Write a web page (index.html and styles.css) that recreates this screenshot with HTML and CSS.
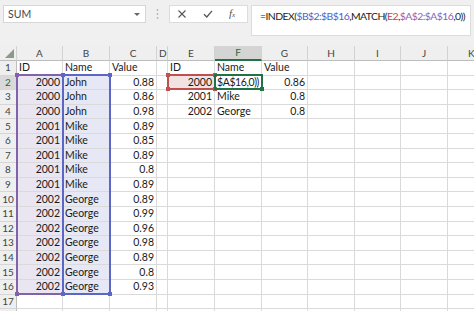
FILE: index.html
```html
<!DOCTYPE html>
<html lang="en">
<head>
  <meta charset="UTF-8">
  <title>INDEX MATCH</title>
  <link rel="stylesheet" href="styles.css">
</head>
<body>
<div class="toolbar">
  <div class="namebox"><span>SUM</span><span class="caret"></span></div>
  <div class="grip">
    <svg width="3" height="12" viewBox="0 0 3 12"><circle cx="1.5" cy="2" r="0.9" fill="#b5b5b5"/><circle cx="1.5" cy="6" r="0.9" fill="#b5b5b5"/><circle cx="1.5" cy="10" r="0.9" fill="#b5b5b5"/></svg>
  </div>
  <div class="fxbtns">
    <svg class="ico" width="10" height="10" viewBox="0 0 10 10"><path d="M1.5 1.5L8.5 8.5M8.5 1.5L1.5 8.5" stroke="#555" stroke-width="1.1" fill="none"/></svg>
    <svg class="ico" width="10" height="10" viewBox="0 0 10 10"><path d="M1 5.2L3.8 8L9 1.8" stroke="#555" stroke-width="1.3" fill="none"/></svg>
    <span class="fx">f<small>x</small></span>
  </div>
  <div class="formula">=INDEX(<span class="ref-b">$B$2:$B$16</span>,MATCH(<span class="ref-e">E2</span>,<span class="ref-a">$A$2:$A$16</span>,0))</div>
</div>

<div class="sheetwrap">
  <table class="sheet">
    <colgroup>
      <col class="c-rh"><col class="c46"><col class="c47"><col class="c47"><col class="c11"><col class="c47"><col class="c47"><col class="c46"><col class="c47"><col class="c46"><col class="c47"><col class="c47">
    </colgroup>
    <tr class="hdr">
      <td class="corner"><span class="tri"></span></td><td>A</td><td>B</td><td>C</td><td>D</td><td>E</td><td class="on">F</td><td>G</td><td>H</td><td>I</td><td>J</td><td class="k">K</td>
    </tr>
    <tr>
      <td class="rh">1</td><td>ID</td><td>Name</td><td>Value</td><td></td><td>ID</td><td>Name</td><td>Value</td><td></td><td></td><td></td><td></td>
    </tr>
    <tr>
      <td class="rh on">2</td><td class="n ra">2000</td><td class="rb">John</td><td class="n">0.88</td><td></td><td class="n re">2000</td><td class="edit">$A$16,0))</td><td class="n">0.86</td><td></td><td></td><td></td><td></td>
    </tr>
    <tr>
      <td class="rh">3</td><td class="n ra">2000</td><td class="rb">John</td><td class="n">0.86</td><td></td><td class="n">2001</td><td>Mike</td><td class="n">0.8</td><td></td><td></td><td></td><td></td>
    </tr>
    <tr>
      <td class="rh">4</td><td class="n ra">2000</td><td class="rb">John</td><td class="n">0.98</td><td></td><td class="n">2002</td><td>George</td><td class="n">0.8</td><td></td><td></td><td></td><td></td>
    </tr>
    <tr>
      <td class="rh">5</td><td class="n ra">2001</td><td class="rb">Mike</td><td class="n">0.89</td><td></td><td></td><td></td><td></td><td></td><td></td><td></td><td></td>
    </tr>
    <tr>
      <td class="rh">6</td><td class="n ra">2001</td><td class="rb">Mike</td><td class="n">0.85</td><td></td><td></td><td></td><td></td><td></td><td></td><td></td><td></td>
    </tr>
    <tr>
      <td class="rh">7</td><td class="n ra">2001</td><td class="rb">Mike</td><td class="n">0.89</td><td></td><td></td><td></td><td></td><td></td><td></td><td></td><td></td>
    </tr>
    <tr>
      <td class="rh">8</td><td class="n ra">2001</td><td class="rb">Mike</td><td class="n">0.8</td><td></td><td></td><td></td><td></td><td></td><td></td><td></td><td></td>
    </tr>
    <tr>
      <td class="rh">9</td><td class="n ra">2001</td><td class="rb">Mike</td><td class="n">0.89</td><td></td><td></td><td></td><td></td><td></td><td></td><td></td><td></td>
    </tr>
    <tr>
      <td class="rh">10</td><td class="n ra">2002</td><td class="rb">George</td><td class="n">0.89</td><td></td><td></td><td></td><td></td><td></td><td></td><td></td><td></td>
    </tr>
    <tr>
      <td class="rh">11</td><td class="n ra">2002</td><td class="rb">George</td><td class="n">0.99</td><td></td><td></td><td></td><td></td><td></td><td></td><td></td><td></td>
    </tr>
    <tr>
      <td class="rh">12</td><td class="n ra">2002</td><td class="rb">George</td><td class="n">0.96</td><td></td><td></td><td></td><td></td><td></td><td></td><td></td><td></td>
    </tr>
    <tr>
      <td class="rh">13</td><td class="n ra">2002</td><td class="rb">George</td><td class="n">0.98</td><td></td><td></td><td></td><td></td><td></td><td></td><td></td><td></td>
    </tr>
    <tr>
      <td class="rh">14</td><td class="n ra">2002</td><td class="rb">George</td><td class="n">0.89</td><td></td><td></td><td></td><td></td><td></td><td></td><td></td><td></td>
    </tr>
    <tr>
      <td class="rh">15</td><td class="n ra">2002</td><td class="rb">George</td><td class="n">0.8</td><td></td><td></td><td></td><td></td><td></td><td></td><td></td><td></td>
    </tr>
    <tr>
      <td class="rh">16</td><td class="n ra">2002</td><td class="rb">George</td><td class="n">0.93</td><td></td><td></td><td></td><td></td><td></td><td></td><td></td><td></td>
    </tr>
    <tr>
      <td class="rh">17</td><td></td><td></td><td></td><td></td><td></td><td></td><td></td><td></td><td></td><td></td><td></td>
    </tr>
    <tr>
      <td class="rh"></td><td></td><td></td><td></td><td></td><td></td><td></td><td></td><td></td><td></td><td></td><td></td>
    </tr>
  </table>

  <!-- reference highlight boxes -->
  <div class="refbox box-a"><i class="h tl"></i><i class="h tr"></i><i class="h bl"></i><i class="h br"></i></div>
  <div class="refbox box-b"><i class="h tl"></i><i class="h tr"></i><i class="h bl"></i><i class="h br"></i></div>
  <div class="refbox box-e"><i class="h tl"></i><i class="h tr"></i><i class="h bl"></i><i class="h br"></i></div>
  <div class="refbox box-f"><i class="h br"></i></div>
</div>
</body>
</html>
```

FILE: styles.css
```css
body {
  margin: 0;
  width: 474px;
  height: 311px;
  overflow: hidden;
  background: #fff;
  font-family: Lato, "Liberation Sans", sans-serif;
  color: #1a1a1a;
}

/* formula bar */
.toolbar {
  height: 46px;
  box-sizing: border-box;
  padding: 5px 3px 0;
  background: #f0f0f0;
  display: flex;
  align-items: flex-start;
}
.namebox {
  width: 143px;
  height: 18px;
  box-sizing: border-box;
  background: #fff;
  border: 1px solid #d6d6d6;
  display: flex;
  align-items: center;
  justify-content: space-between;
  padding: 0 5px 0 4px;
  font-size: 10.5px;
  color: #444;
}
.caret {
  width: 0;
  height: 0;
  border-left: 3px solid transparent;
  border-right: 3px solid transparent;
  border-top: 3px solid #666;
}
.grip {
  width: 23px;
  height: 18px;
  display: flex;
  align-items: center;
  justify-content: center;
}
.fxbtns {
  width: 79px;
  height: 18px;
  box-sizing: border-box;
  background: #fff;
  border: 1px solid #dcdcdc;
  display: flex;
  align-items: center;
  gap: 16px;
  padding-left: 7px;
}
.ico { display: block; }
.fx {
  width: 10px;
  font-family: "Liberation Serif", serif;
  font-style: italic;
  font-size: 11px;
  color: #555;
  line-height: 10px;
}
.fx small { font-size: 7px; }
.formula {
  width: 220px;
  height: 31px;
  margin-left: 3px;
  box-sizing: border-box;
  background: #fff;
  border: 1px solid #dcdcdc;
  padding: 3px 0 0 8px;
  font-size: 10.4px;
  letter-spacing: -0.55px;
  line-height: 14px;
  color: #222;
  white-space: nowrap;
  overflow: hidden;
}
.ref-b { color: #4d62c6; }
.ref-e { color: #b8484a; }
.ref-a { color: #8a62b4; }

/* grid */
.sheetwrap {
  position: relative;
  width: 474px;
  overflow: hidden;
}
.sheet {
  border-collapse: separate;
  border-spacing: 0;
  table-layout: fixed;
  width: 495px;
  font-size: 10.5px;
}
.c-rh { width: 17px; }
.c46 { width: 46px; }
.c47 { width: 47px; }
.c11 { width: 11px; }

.sheet td {
  height: 14.6px;
  box-sizing: border-box;
  padding: 0 2px;
  border-right: 1px solid #dadada;
  border-bottom: 1px solid #dadada;
  white-space: nowrap;
  overflow: hidden;
  line-height: 13px;
}
.sheet .hdr td {
  height: 14px;
  background: #efefef;
  color: #444;
  text-align: center;
  border-right-color: #d2d2d2;
  border-bottom-color: #bdbdbd;
  font-size: 10px;
}
.sheet .hdr td.k {
  text-align: left;
  padding-left: 20px;
}
.sheet .hdr td.on {
  background: #d4d4d4;
  color: #1d6b40;
  border-bottom: 2px solid #217346;
}
.sheet td.corner {
  position: relative;
  padding: 0;
}
.tri {
  position: absolute;
  right: 2px;
  bottom: 2px;
  width: 0;
  height: 0;
  border-left: 9px solid transparent;
  border-bottom: 9px solid #8c9a8c;
}
.sheet td.rh {
  background: #efefef;
  color: #444;
  text-align: center;
  padding: 0;
  border-right-color: #bdbdbd;
  border-bottom-color: #d6d6d6;
  font-size: 10px;
}
.sheet td.rh.on {
  background: #d9d9d9;
  color: #1d6b40;
}
.sheet td.n { text-align: right; }
.sheet td.ra { background: #e9e6f1; }
.sheet td.rb { background: #e6e8f5; }
.sheet td.re { background: #f3e2e2; }
.sheet td.edit { letter-spacing: -0.4px; }

/* highlight boxes over the grid */
.refbox {
  position: absolute;
  box-sizing: border-box;
  border: 2px solid;
}
.box-a {
  left: 16px;
  top: 28px;
  width: 48px;
  height: 221px;
  border-color: #8063ab;
  color: #8063ab;
}
.box-b {
  left: 62px;
  top: 28px;
  width: 49px;
  height: 221px;
  border-color: #5c66c4;
  color: #5c66c4;
}
.box-e {
  left: 167px;
  top: 28px;
  width: 49px;
  height: 16px;
  border-color: #c0504d;
  color: #c0504d;
}
.box-f {
  left: 214px;
  top: 28px;
  width: 49px;
  height: 16px;
  border-color: #217346;
  color: #217346;
}
.h {
  position: absolute;
  width: 4px;
  height: 4px;
  background: currentColor;
}
.h.tl { left: -3px; top: -3px; }
.h.tr { right: -3px; top: -3px; }
.h.bl { left: -3px; bottom: -3px; }
.h.br { right: -3px; bottom: -3px; }
```
